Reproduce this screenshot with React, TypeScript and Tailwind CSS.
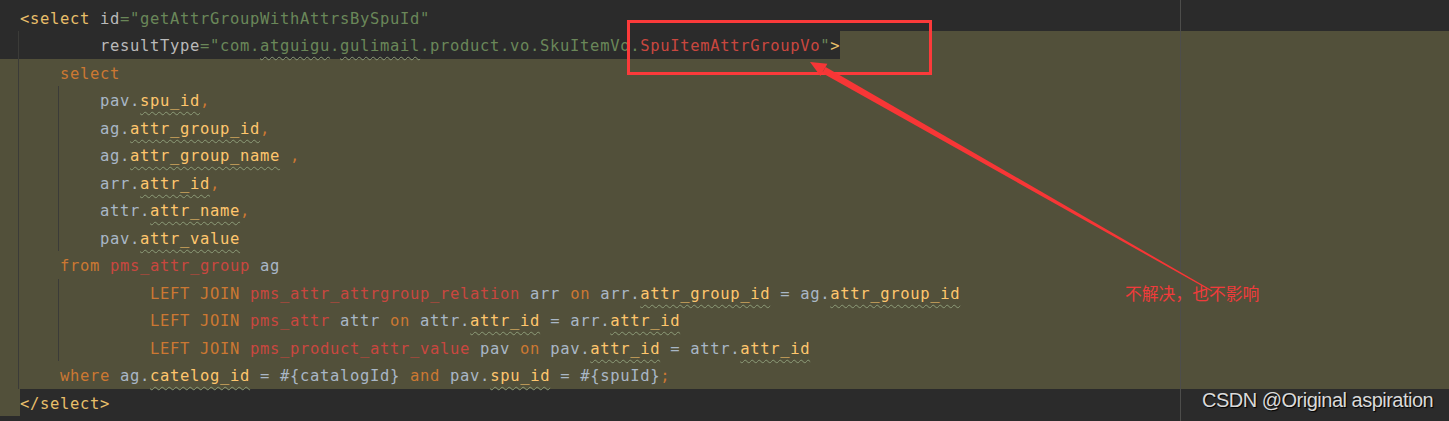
import React from "react";

const K = "text-[#cc7832]";
const T = "text-[#e8bf6a]";
const A = "text-[#bababa]";
const G = "text-[#6a8759]";
const I = "text-[#a9b7c6]";
const R = "text-[#c9473f]";
const SQ = "underline decoration-wavy decoration-[#8d9c78] decoration-1 underline-offset-[5px] [text-decoration-skip-ink:none]";
const C = "text-[#ffc66d] " + SQ;
const GS = "text-[#6a8759] " + SQ;

function S({ c, children }: { c: string; children: React.ReactNode }) {
  return <span className={c}>{children}</span>;
}

type Bg = "dark" | "olive" | "split" | "end";

function Row({
  bg,
  g1 = false,
  indent,
  children,
}: {
  bg: Bg;
  g1?: boolean;
  indent: React.ReactNode;
  children: React.ReactNode;
}) {
  const rowBg = bg === "olive" ? "bg-[#52503a]" : "bg-[#2b2b2b]";
  return (
    <div className={`flex h-[27.5px] items-center ${rowBg}`}>
      {bg === "end" ? (
        <div className="w-[20px] shrink-0 self-stretch bg-[#52503a]" />
      ) : (
        <>
          <div className="w-[18px] shrink-0 self-stretch" />
          <div className={`w-px shrink-0 self-stretch ${g1 ? "bg-[#3b3b38]" : ""}`} />
          <div className="w-px shrink-0 self-stretch" />
        </>
      )}
      {indent}
      <span className="whitespace-pre pt-[4px]">{children}</span>
      {bg === "split" && <div className="flex-1 self-stretch bg-[#52503a]" />}
    </div>
  );
}

const Guide2 = ({ rest }: { rest: "w-[40px]" | "w-[90px]" }) => (
  <>
    <div className="w-[38px] shrink-0 self-stretch" />
    <div className="w-px shrink-0 self-stretch bg-[#3b3b38]" />
    <div className="w-px shrink-0 self-stretch" />
    <div className={`${rest} shrink-0 self-stretch`} />
  </>
);

const In4 = <div className="w-[40px] shrink-0" />;
const In8 = <div className="w-[80px] shrink-0" />;

export default function App() {
  return (
    <div className="relative h-[421px] w-[1449px] overflow-hidden bg-[#2b2b2b] pt-[3.5px] font-['DejaVu_Sans_Mono',monospace] text-[15.5px] tracking-[0.67px]">
      <Row bg="dark" indent={null}>
        <S c={T}>&lt;select</S> <S c={A}>id</S>
        <S c={G}>="getAttrGroupWithAttrsBySpuId"</S>
      </Row>
      <Row bg="split" g1 indent={In8}>
        <S c={A}>resultType</S>
        <S c={G}>="com.</S>
        <S c={GS}>atguigu</S>
        <S c={G}>.</S>
        <S c={GS}>gulimail</S>
        <S c={G}>.product.vo.SkuItemVo.</S>
        <S c={R}>SpuItemAttrGroupVo</S>
        <S c={G}>"</S>
        <S c={T}>&gt;</S>
      </Row>
      <Row bg="olive" g1 indent={In4}>
        <S c={K}>select</S>
      </Row>
      <Row bg="olive" g1 indent={<Guide2 rest="w-[40px]" />}>
        <S c={I}>pav.</S>
        <S c={C}>spu_id</S>
        <S c={K}>,</S>
      </Row>
      <Row bg="olive" g1 indent={<Guide2 rest="w-[40px]" />}>
        <S c={I}>ag.</S>
        <S c={C}>attr_group_id</S>
        <S c={K}>,</S>
      </Row>
      <Row bg="olive" g1 indent={<Guide2 rest="w-[40px]" />}>
        <S c={I}>ag.</S>
        <S c={C}>attr_group_name</S>
        <S c={K}> ,</S>
      </Row>
      <Row bg="olive" g1 indent={<Guide2 rest="w-[40px]" />}>
        <S c={I}>arr.</S>
        <S c={C}>attr_id</S>
        <S c={K}>,</S>
      </Row>
      <Row bg="olive" g1 indent={<Guide2 rest="w-[40px]" />}>
        <S c={I}>attr.</S>
        <S c={C}>attr_name</S>
        <S c={K}>,</S>
      </Row>
      <Row bg="olive" g1 indent={<Guide2 rest="w-[40px]" />}>
        <S c={I}>pav.</S>
        <S c={C}>attr_value</S>
      </Row>
      <Row bg="olive" g1 indent={In4}>
        <S c={K}>from</S> <S c={R}>pms_attr_group</S>
        <S c={I}> ag</S>
      </Row>
      <Row bg="olive" g1 indent={<Guide2 rest="w-[90px]" />}>
        <S c={K}>LEFT JOIN</S> <S c={R}>pms_attr_attrgroup_relation</S>
        <S c={I}> arr </S>
        <S c={K}>on</S>
        <S c={I}> arr.</S>
        <S c={C}>attr_group_id</S>
        <S c={I}> = ag.</S>
        <S c={C}>attr_group_id</S>
      </Row>
      <Row bg="olive" g1 indent={<Guide2 rest="w-[90px]" />}>
        <S c={K}>LEFT JOIN</S> <S c={R}>pms_attr</S>
        <S c={I}> attr </S>
        <S c={K}>on</S>
        <S c={I}> attr.</S>
        <S c={C}>attr_id</S>
        <S c={I}> = arr.</S>
        <S c={C}>attr_id</S>
      </Row>
      <Row bg="olive" g1 indent={<Guide2 rest="w-[90px]" />}>
        <S c={K}>LEFT JOIN</S> <S c={R}>pms_product_attr_value</S>
        <S c={I}> pav </S>
        <S c={K}>on</S>
        <S c={I}> pav.</S>
        <S c={C}>attr_id</S>
        <S c={I}> = attr.</S>
        <S c={C}>attr_id</S>
      </Row>
      <Row bg="olive" g1 indent={In4}>
        <S c={K}>where</S>
        <S c={I}> ag.</S>
        <S c={C}>catelog_id</S>
        <S c={I}>{" = #{catalogId} "}</S>
        <S c={K}>and</S>
        <S c={I}> pav.</S>
        <S c={C}>spu_id</S>
        <S c={I}>{" = #{spuId}"}</S>
        <S c={K}>;</S>
      </Row>
      <Row bg="end" indent={null}>
        <S c={T}>&lt;/select&gt;</S>
      </Row>

      {/* right margin guide */}
      <div className="pointer-events-none absolute left-[1180px] top-0 h-full w-px bg-[#4d4d4b]" />

      {/* annotation: red box */}
      <div className="pointer-events-none absolute left-[627px] top-[20px] h-[55px] w-[305px] border-[3px] border-[#fb3a3a]" />

      {/* annotation: arrow */}
      <svg
        className="pointer-events-none absolute left-0 top-0"
        width="1449"
        height="421"
        viewBox="0 0 1449 421"
      >
        <polygon
          points="822.2,72.9 825.6,66.9 1212.3,290.6 1211.8,291.5"
          fill="#f73636"
        />
        <polygon points="810,62 827.4,63.8 820.4,76" fill="#f73636" />
      </svg>

      {/* annotation text */}
      <div className="pointer-events-none absolute left-[1125px] top-[285px] font-['Noto_Sans_CJK_SC',sans-serif] text-[16.8px] leading-none tracking-normal text-[#f03b3b]">
        不解决，也不影响
      </div>

      {/* watermark */}
      <div className="pointer-events-none absolute left-[1202px] top-[390px] font-['Liberation_Sans',Arial,sans-serif] text-[20px] leading-none tracking-[-0.5px] text-[#dadada] [text-shadow:1px_1px_1px_#000]">
        CSDN @Original aspiration
      </div>
    </div>
  );
}
